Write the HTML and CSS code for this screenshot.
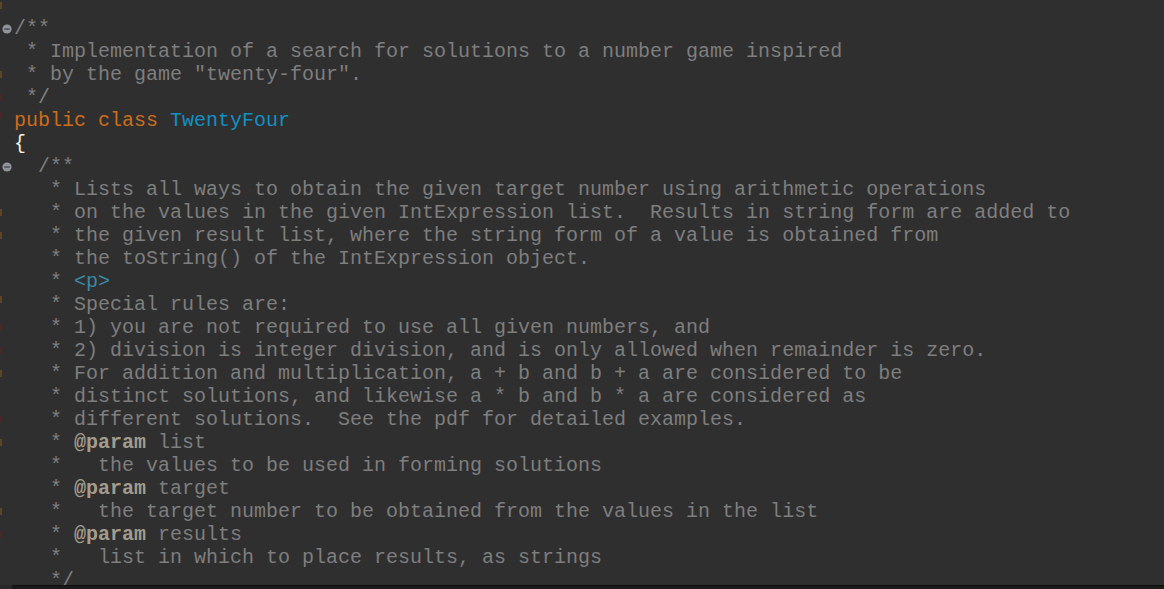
FILE: index.html
```html
<!DOCTYPE html>
<html>
<head>
<meta charset="utf-8">
<link rel="stylesheet" href="styles.css">
</head>
<body>
<div class="screen">
  <div class="editor">
    <div class="lines">
      <div class="line"><span class="gut"><i class="mk brown"></i></span><span class="code"> </span></div>
      <div class="line"><span class="gut"><svg class="fold" viewBox="0 0 10 10"><circle cx="5" cy="5" r="4.6" fill="#8e959c"/><rect x="2.3" y="4.3" width="5.4" height="1.5" fill="#4b5056"/></svg></span><span class="code c">/**</span></div>
      <div class="line"><span class="gut"></span><span class="code c"> * Implementation of a search for solutions to a number game inspired</span></div>
      <div class="line"><span class="gut"><i class="mk brown"></i></span><span class="code c"> * by the game "twenty-four".</span></div>
      <div class="line"><span class="gut"><i class="mk red"></i></span><span class="code c"> */</span></div>
      <div class="line"><span class="gut"><i class="mk red up"></i></span><span class="code"><span class="kw">public</span> <span class="kw">class</span> <span class="cls">TwentyFour</span></span></div>
      <div class="line"><span class="gut"></span><span class="code"><span class="br">{</span></span></div>
      <div class="line"><span class="gut"><svg class="fold" viewBox="0 0 10 10"><circle cx="5" cy="5" r="4.6" fill="#8e959c"/><rect x="2.3" y="4.3" width="5.4" height="1.5" fill="#4b5056"/></svg></span><span class="code c">  /**</span></div>
      <div class="line"><span class="gut"></span><span class="code c">   * Lists all ways to obtain the given target number using arithmetic operations</span></div>
      <div class="line"><span class="gut"><i class="mk brown"></i></span><span class="code c">   * on the values in the given IntExpression list.  Results in string form are added to</span></div>
      <div class="line"><span class="gut"><i class="mk brown"></i></span><span class="code c">   * the given result list, where the string form of a value is obtained from</span></div>
      <div class="line"><span class="gut"></span><span class="code c">   * the toString() of the IntExpression object.</span></div>
      <div class="line"><span class="gut"></span><span class="code c">   * <span class="tag">&lt;p&gt;</span></span></div>
      <div class="line"><span class="gut"><i class="mk brown up"></i></span><span class="code c">   * Special rules are:</span></div>
      <div class="line"><span class="gut"><i class="mk red"></i></span><span class="code c">   * 1) you are not required to use all given numbers, and</span></div>
      <div class="line"><span class="gut"><i class="mk red"></i></span><span class="code c">   * 2) division is integer division, and is only allowed when remainder is zero.</span></div>
      <div class="line"><span class="gut"><i class="mk brown"></i></span><span class="code c">   * For addition and multiplication, a + b and b + a are considered to be</span></div>
      <div class="line"><span class="gut"></span><span class="code c">   * distinct solutions, and likewise a * b and b * a are considered as</span></div>
      <div class="line"><span class="gut"><i class="mk red"></i></span><span class="code c">   * different solutions.  See the pdf for detailed examples.</span></div>
      <div class="line"><span class="gut"><i class="mk brown"></i></span><span class="code c">   * <b class="jd">@param</b> list</span></div>
      <div class="line"><span class="gut"></span><span class="code c">   *   the values to be used in forming solutions</span></div>
      <div class="line"><span class="gut"></span><span class="code c">   * <b class="jd">@param</b> target</span></div>
      <div class="line"><span class="gut"><i class="mk brown"></i></span><span class="code c">   *   the target number to be obtained from the values in the list</span></div>
      <div class="line"><span class="gut"><i class="mk red"></i></span><span class="code c">   * <b class="jd">@param</b> results</span></div>
      <div class="line"><span class="gut"></span><span class="code c">   *   list in which to place results, as strings</span></div>
      <div class="line"><span class="gut"></span><span class="code c">   */</span></div>
    </div>
  </div>
  <div class="hbar"><div class="hbar-left"></div><div class="hbar-main"></div></div>
</div>
</body>
</html>
```

FILE: styles.css
```css
html, body {
  margin: 0;
  padding: 0;
  background: #2f2f2f;
}
.screen {
  width: 1164px;
  height: 589px;
  display: flex;
  flex-direction: column;
  overflow: hidden;
  background: #2f2f2f;
}
.editor {
  height: 585px;
  overflow: hidden;
  flex: none;
}
.lines {
  margin-top: -6px;
  display: flex;
  flex-direction: column;
}
.line {
  display: flex;
  height: 23px;
  align-items: center;
}
.gut {
  width: 14px;
  height: 23px;
  flex: none;
  display: flex;
  align-items: center;
  position: relative;
}
.fold {
  width: 10px;
  height: 10px;
  margin-left: 2px;
}
.mk {
  display: block;
  width: 2px;
  height: 7px;
  margin-left: 0;
}
.mk.up { margin-top: -10px; }
.mk.brown { background: #5e4526; }
.mk.red { background: #4e2626; }
.code {
  font-family: "Liberation Mono", "Courier New", monospace;
  font-size: 20px;
  line-height: 23px;
  white-space: pre;
  color: #d0d0d0;
}
.c { color: #7e7e7e; }
.kw { color: #cc6c1d; }
.cls { color: #1290c3; }
.br { color: #f2f0de; }
.tag { color: #3b88a5; }
.jd { color: #a39c8d; font-weight: bold; }
.hbar {
  flex: none;
  height: 4px;
  display: flex;
}
.hbar-left {
  width: 12px;
  background: #282828;
}
.hbar-main {
  flex: 1;
  background: #1a1a1a;
  border-top: 1px solid #0e0e0e;
}
```
